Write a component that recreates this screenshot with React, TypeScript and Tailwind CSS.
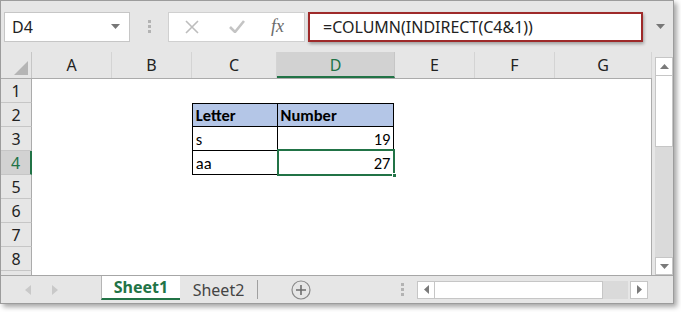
import type { ReactNode } from "react";

const UI_FONT = "font-['Segoe_UI','Noto_Sans','Open_Sans',sans-serif]";
const CELL_FONT = "font-['Calibri','Carlito','Lato',sans-serif]";

const COLUMNS = [
  { key: "A", width: "w-[80px]" },
  { key: "B", width: "w-[80px]" },
  { key: "C", width: "w-[85px]" },
  { key: "D", width: "w-[118px]" },
  { key: "E", width: "w-[80px]" },
  { key: "F", width: "w-[80px]" },
  { key: "G", width: "w-[97px]" },
];

type CellData = { text: string; bold?: boolean; right?: boolean; head?: boolean };

const TABLE: Record<number, { C: CellData; D: CellData }> = {
  2: { C: { text: "Letter", bold: true, head: true }, D: { text: "Number", bold: true, head: true } },
  3: { C: { text: "s" }, D: { text: "19", right: true } },
  4: { C: { text: "aa" }, D: { text: "27", right: true } },
};

function Chevron({ className }: { className?: string }) {
  return (
    <svg width="9" height="5" viewBox="0 0 9 5" className={className}>
      <path d="M0 0 H9 L4.5 5 Z" fill="currentColor" />
    </svg>
  );
}

function Dots({ className }: { className?: string }) {
  return (
    <div className={`flex flex-col gap-[2px] ${className ?? ""}`}>
      <span className="h-[3px] w-[3px] bg-[#b3b3b3]" />
      <span className="h-[3px] w-[3px] bg-[#b3b3b3]" />
      <span className="h-[3px] w-[3px] bg-[#b3b3b3]" />
    </div>
  );
}

function FormulaBar() {
  return (
    <div className={`flex h-[51px] items-center pl-[3px] ${UI_FONT}`}>
      <div className="flex h-[30px] w-[126px] items-center justify-between border border-[#c6c6c6] bg-white pl-[7px] pr-[9px] text-[16px] text-[#222]">
        <span>D4</span>
        <Chevron className="text-[#777]" />
      </div>
      <div className="flex w-[38px] justify-center">
        <Dots />
      </div>
      <div className="flex h-[30px] w-[137px] items-center border border-[#d0d0d0] bg-white">
        <svg width="14" height="14" viewBox="0 0 14 14" className="ml-[16px]">
          <path d="M1 1 L13 13 M13 1 L1 13" stroke="#bdbdbd" strokeWidth="1.6" fill="none" />
        </svg>
        <svg width="16" height="13" viewBox="0 0 16 13" className="ml-[30px]">
          <path d="M1 7 L6 12 L15 1" stroke="#c4c4c4" strokeWidth="2.6" fill="none" />
        </svg>
        <span className="ml-[26px] font-['Liberation_Serif',serif] text-[18px] italic text-[#6a6a6a]">fx</span>
      </div>
      <div className="ml-[3px] flex h-[30px] w-[335px] items-center border-2 border-[#9e2a2a] bg-white pl-[13px] text-[16px] text-[#222] shadow-[1px_2px_3px_rgba(0,0,0,0.3)]">
        =COLUMN(INDIRECT(C4&amp;1))
      </div>
      <div className="flex flex-1 justify-center pl-[4px]">
        <Chevron className="text-[#777]" />
      </div>
    </div>
  );
}

function ColumnHeaders() {
  return (
    <div className={`flex h-[27px] border-b border-[#ababab] ${UI_FONT} text-[16px]`}>
      <div className="relative w-[31px] border-r border-[#c6c6c6]">
        <svg width="14" height="14" viewBox="0 0 14 14" className="absolute bottom-[3px] right-[3px]">
          <path d="M14 0 V14 H0 Z" fill="#b5b5b5" />
        </svg>
      </div>
      {COLUMNS.map((col) =>
        col.key === "D" ? (
          <div
            key={col.key}
            className={`${col.width} flex items-center justify-center border-b-2 border-r border-b-[#217346] border-r-[#c6c6c6] bg-[#d2d2d2] pt-[2px] text-[#217346]`}
          >
            {col.key}
          </div>
        ) : (
          <div key={col.key} className={`${col.width} flex items-center justify-center border-r border-[#d4d4d4] text-[#222]`}>
            {col.key}
          </div>
        ),
      )}
    </div>
  );
}

function Cell({ row, col, width }: { row: number; col: string; width: string }) {
  const data = TABLE[row]?.[col as "C" | "D"];
  let frame = "";
  if (TABLE[row] && (col === "C" || col === "D")) {
    frame = "border-b border-l border-black";
    if (col === "D") frame += " border-r";
    if (row === 2) frame += " border-t";
  }
  const selected = row === 4 && col === "D";
  return (
    <div
      className={`${width} relative flex items-end overflow-visible pb-[1px] ${CELL_FONT} text-[16.5px] leading-[20px] text-black ${frame} ${
        data?.head ? "bg-[#b4c6e7]" : ""
      } ${data?.right ? "justify-end pr-[3px]" : "pl-[3px]"} ${data?.bold ? "font-bold" : ""}`}
    >
      {data?.text}
      {selected && (
        <div className="absolute -bottom-[2px] -left-[1px] -right-[2px] -top-[2px] border-2 border-[#217346]">
          <span className="absolute -bottom-[4px] -right-[4px] h-[5px] w-[5px] border border-white bg-[#217346]" />
        </div>
      )}
    </div>
  );
}

function Grid() {
  const rows = [1, 2, 3, 4, 5, 6, 7, 8, 9];
  return (
    <div className="h-[196px] overflow-hidden">
      {rows.map((r) => (
        <div key={r} className="flex h-[24px]">
          <div
            className={`flex w-[31px] items-center justify-center border-b ${UI_FONT} text-[16px] ${
              r === 4
                ? "border-r-2 border-b-[#c6c6c6] border-r-[#217346] bg-[#d2d2d2] text-[#217346]"
                : "border-r border-b-[#c6c6c6] border-r-[#ababab] text-[#222]"
            }`}
          >
            {r < 9 ? r : null}
          </div>
          <div className="flex w-[620px] border-r border-[#ababab] bg-white">
            {COLUMNS.map((col) => (
              <Cell key={col.key} row={r} col={col.key} width={col.width} />
            ))}
          </div>
        </div>
      ))}
    </div>
  );
}

function ScrollButton({ children, className }: { children: ReactNode; className?: string }) {
  return (
    <div className={`flex h-[18px] w-[18px] items-center justify-center border border-[#c6c6c6] bg-white ${className ?? ""}`}>
      {children}
    </div>
  );
}

function VerticalScrollbar() {
  return (
    <div className="ml-[3px] flex w-[18px] flex-col pt-[5px]">
      <ScrollButton className="h-[19px]">
        <svg width="9" height="5" viewBox="0 0 9 5">
          <path d="M0 5 H9 L4.5 0 Z" fill="#7a7a7a" />
        </svg>
      </ScrollButton>
      <div className="h-[71px] border border-t-0 border-[#c6c6c6] bg-white" />
      <div className="flex-1 bg-[#dadada]" />
      <ScrollButton>
        <Chevron className="text-[#7a7a7a]" />
      </ScrollButton>
    </div>
  );
}

function TabBar() {
  return (
    <div className={`flex h-[28px] border-t border-[#a6a6a6] ${UI_FONT}`}>
      <div className="flex w-[100px] items-center gap-[21px] pl-[24px]">
        <svg width="6" height="10" viewBox="0 0 6 10">
          <path d="M6 0 V10 L0 5 Z" fill="#c9c9c9" />
        </svg>
        <svg width="6" height="10" viewBox="0 0 6 10">
          <path d="M0 0 V10 L6 5 Z" fill="#c9c9c9" />
        </svg>
      </div>
      <div className="mb-[3px] flex w-[79px] items-center justify-center border-b-2 border-l border-b-[#217346] border-l-[#b5b5b5] bg-white text-[16px] font-bold text-[#217346]">
        Sheet1
      </div>
      <div className="my-[4px] flex w-[78px] items-center justify-center border-r border-[#a0a0a0] text-[16px] text-[#444]">
        Sheet2
      </div>
      <div className="flex w-[86px] items-center justify-center">
        <svg width="20" height="20" viewBox="0 0 20 20">
          <circle cx="10" cy="10" r="9" stroke="#8a8a8a" strokeWidth="1.2" fill="none" />
          <path d="M10 5 V15 M5 10 H15" stroke="#6e6e6e" strokeWidth="1.6" />
        </svg>
      </div>
      <div className="flex w-[57px]" />
      <div className="flex items-center">
        <Dots />
      </div>
      <div className="ml-[13px] flex items-center">
        <ScrollButton>
          <svg width="5" height="9" viewBox="0 0 5 9">
            <path d="M5 0 V9 L0 4.5 Z" fill="#7a7a7a" />
          </svg>
        </ScrollButton>
        <div className="h-[18px] w-[168px] border border-l-0 border-[#c6c6c6] bg-white" />
        <div className="h-[18px] w-[25px] bg-[#dadada]" />
        <ScrollButton className="ml-[2px]">
          <svg width="5" height="9" viewBox="0 0 5 9">
            <path d="M0 0 V9 L5 4.5 Z" fill="#7a7a7a" />
          </svg>
        </ScrollButton>
      </div>
    </div>
  );
}

export default function App() {
  return (
    <div className="h-[312px] w-[681px] bg-white">
      <div className="flex h-[304px] w-[674px] flex-col border border-[#9c9c9c] bg-[#e6e6e6] shadow-[3px_3px_5px_rgba(0,0,0,0.35)]">
        <FormulaBar />
        <div className="flex">
          <div className="flex flex-col">
            <ColumnHeaders />
            <Grid />
          </div>
          <VerticalScrollbar />
        </div>
        <TabBar />
      </div>
    </div>
  );
}
